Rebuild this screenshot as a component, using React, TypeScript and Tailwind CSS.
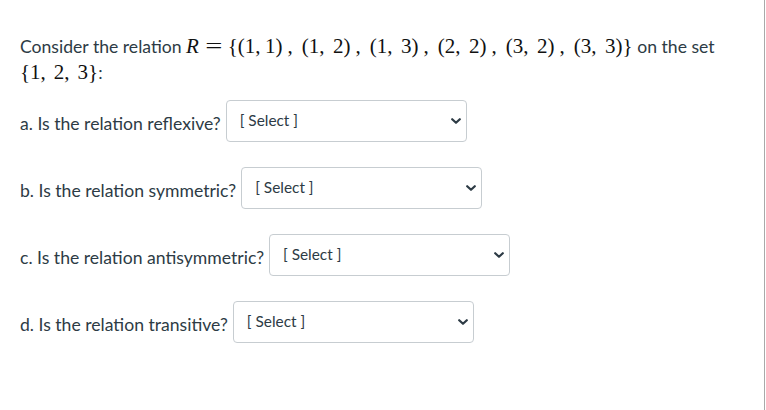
import React from 'react';

const questions = [
  'a. Is the relation reflexive?',
  'b. Is the relation symmetric?',
  'c. Is the relation antisymmetric?',
  'd. Is the relation transitive?',
];

const pairs: [string, string, boolean][] = [
  ['1', '1', false],
  ['1', '2', true],
  ['1', '3', true],
  ['2', '2', true],
  ['3', '2', true],
  ['3', '3', true],
];

// math is set in a serif face, KaTeX-like spacing done with small gaps
const Pair: React.FC<{ a: string; b: string; spaced: boolean }> = ({ a, b, spaced }) => (
  <span>
    ({a},
    <span className={spaced ? 'inline-block w-[8.5px]' : 'inline-block w-[4.5px]'} />
    {b})
  </span>
);

const Chevron = () => (
  <svg width="10" height="6" viewBox="0 0 10 6" className="shrink-0">
    <path d="M1.2 1.2 L5 4.8 L8.8 1.2" fill="none" stroke="#2d3b45" strokeWidth="2.2" strokeLinecap="round" strokeLinejoin="round" />
  </svg>
);

const SelectBox = () => (
  <div className="flex h-[42px] w-[241px] items-center justify-between rounded-[4px] border border-[#c7cdd1] bg-white pl-[13px] pr-[5px]">
    <span className="-mt-[1px] text-[15.4px] text-[#2d3b45]">[ Select ]</span>
    <Chevron />
  </div>
);

const serif = { fontFamily: '"Liberation Serif", serif' };

const App: React.FC = () => {
  return (
    <div className="h-[410px] w-[766px] bg-white" style={{ fontFamily: 'Lato, sans-serif' }}>
      <div className="h-full w-[765px] border-r border-[#a9a9a9] pl-[20px] pt-[34px] text-[17.6px] text-[#2d3b45]">
        <p className="leading-[25.5px]">
          Consider the relation{' '}
          <span className="whitespace-nowrap text-[21px] leading-none text-[#111]" style={serif}>
            <span className="italic">R</span>
            <span className="ml-[9px] mr-[8px] inline-block scale-x-[1.45]">=</span>
            {'{'}
            {pairs.map(([a, b, s], i) => (
              <React.Fragment key={i}>
                <Pair a={a} b={b} spaced={s} />
                {i < pairs.length - 1 && <span className="ml-[5px] mr-[9px]">,</span>}
              </React.Fragment>
            ))}
            {'}'}
          </span>{' '}
          on the set
          <br />
          <span className="text-[21px] leading-none text-[#111]" style={serif}>
            {'{'}1,<span className="inline-block w-[8px]" />2,<span className="inline-block w-[8px]" />3{'}'}
          </span>
          :
        </p>
        <div className="mt-[15px] flex flex-col gap-[25px]">
          {questions.map((q, i) => (
            <div key={i} className="flex items-center gap-[5px]">
              <span className="mt-[6px]">{q}</span>
              <SelectBox />
            </div>
          ))}
        </div>
      </div>
    </div>
  );
};

export default App;
